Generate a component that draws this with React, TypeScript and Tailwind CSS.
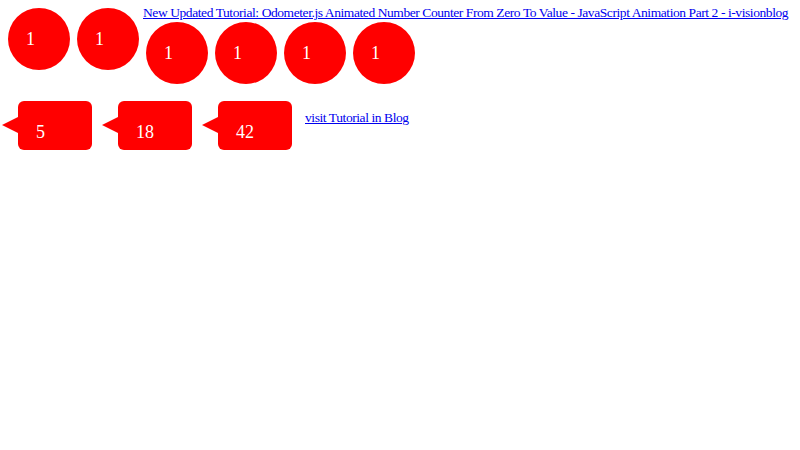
import React from "react";

function Circle({ n }: { n: string }) {
  return (
    <div className="w-[62px] h-[62px] shrink-0 rounded-full bg-[#ff0000] text-white text-[18px] leading-[20px] pt-[21px] pl-[18px]">
      {n}
    </div>
  );
}

function Bubble({ n }: { n: string }) {
  return (
    <div className="flex items-start">
      <div className="w-0 h-0 mt-[16px] border-y-[8px] border-y-transparent border-r-[16px] border-r-[#ff0000]" />
      <div className="w-[74px] h-[49px] rounded-[6px] bg-[#ff0000] text-white text-[18px] leading-[20px] pt-[21px] pl-[18px]">
        {n}
      </div>
    </div>
  );
}

export default function App() {
  return (
    <div className="w-[800px] h-[450px] bg-white font-[family-name:'Liberation_Serif','Times_New_Roman',serif] overflow-hidden">
      <div className="flex items-start">
        <div className="flex gap-[7px] pl-[8px] pt-[8px]">
          <Circle n="1" />
          <Circle n="1" />
        </div>
        <div className="ml-[4px]">
          <a
            href="#"
            className="block pt-[5px] text-[13.5px] leading-[15px] tracking-[-0.42px] text-[#0000ee] underline whitespace-nowrap"
          >
            New Updated Tutorial: Odometer.js Animated Number Counter From Zero To Value - JavaScript Animation Part 2 - i-visionblog
          </a>
          <div className="flex gap-[7px] mt-[2px] pl-[3px]">
            <Circle n="1" />
            <Circle n="1" />
            <Circle n="1" />
            <Circle n="1" />
          </div>
        </div>
      </div>
      <div className="flex items-start mt-[17px] pl-[2px] gap-[10px]">
        <Bubble n="5" />
        <Bubble n="18" />
        <Bubble n="42" />
        <a
          href="#"
          className="ml-[3px] mt-[9px] text-[13.5px] leading-[15px] tracking-[-0.42px] text-[#0000ee] underline whitespace-nowrap"
        >
          visit Tutorial in Blog
        </a>
      </div>
    </div>
  );
}
